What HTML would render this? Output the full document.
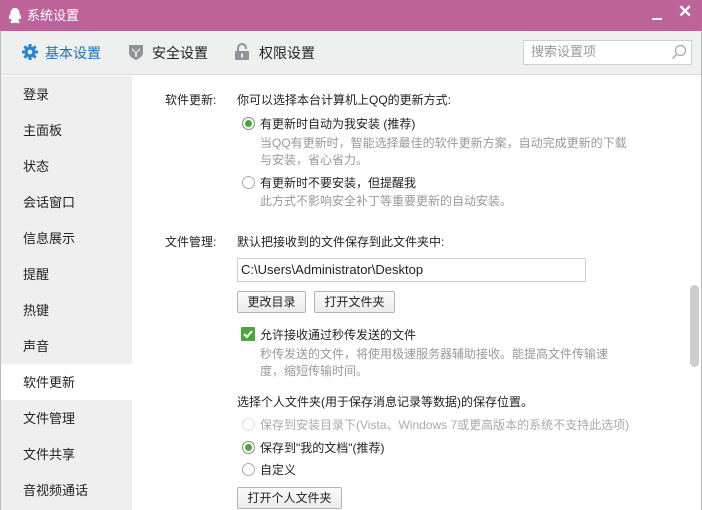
<!DOCTYPE html><html><head><meta charset="utf-8"><style>
*{margin:0;padding:0;box-sizing:border-box}
body{width:702px;height:510px;overflow:hidden;background:#fff;font:12px "Liberation Sans","Noto Sans CJK SC",sans-serif;color:#222;position:relative}
.a{position:absolute;white-space:nowrap;line-height:16px}
.g{color:#999}
.title{position:absolute;left:0;top:0;width:702px;height:31px;background:#bd6399}
.tb{position:absolute;left:0;top:31px;width:702px;height:44px;background:#eef0f0;border-bottom:1px solid #dcdcdc}
.side{position:absolute;left:0;top:76px;width:132px;height:434px;background:#efefef}
.si{position:absolute;left:23px;font-size:13px}
.sel{position:absolute;left:0;top:364px;width:132px;height:36px;background:#fff}
.rad{position:absolute;width:13px;height:13px;border:1px solid #aaa;border-radius:50%;background:#fff}
.rad.on{border-color:#888}
.rad.on::after{content:"";position:absolute;left:2px;top:2px;width:7px;height:7px;border-radius:50%;background:#4aa83a}
.btn{position:absolute;height:22px;border:1px solid #b5b5b5;border-radius:2px;background:linear-gradient(#fafafa,#ececec);text-align:center;line-height:20px;font-size:12px}
</style></head><body>
<div class="title"></div>
<svg class="a" style="left:7px;top:7px" width="16" height="18" viewBox="0 0 16 18"><path d="M8 1C4.5 1 3.5 4 3.5 6.5 2.5 8 1.5 10 2 12c.6.5 1.3-.6 1.5-1 .3 1.5 1 2.3 1.5 2.8-1 .4-2 1-1.5 2 1 .8 3 .3 4.5 0 1.5.3 3.5.8 4.5 0 .5-1-.5-1.6-1.5-2 .5-.5 1.2-1.3 1.5-2.8.2.4.9 1.5 1.5 1 .5-2-.5-4-1.5-5.5C12.5 4 11.5 1 8 1z" fill="#fff"/></svg>
<div class="a" style="left:27px;top:8px;color:#fff;font-size:13px">系统设置</div>
<div class="a" style="left:652px;top:18px;width:10px;height:2px;background:#fff"></div>
<div class="a" style="left:678px;top:4px;color:#fff;font-size:17px;font-weight:bold">✕</div>
<div class="tb"></div>
<svg class="a" style="left:22px;top:44px" width="16" height="16" viewBox="0 0 16 16"><g fill="#2a84d2"><circle cx="8" cy="8" r="5.5"/><rect x="6.5" y="0" width="3" height="16"/><rect x="0" y="6.5" width="16" height="3"/><rect x="6.5" y="0" width="3" height="16" transform="rotate(45 8 8)"/><rect x="6.5" y="0" width="3" height="16" transform="rotate(-45 8 8)"/></g><circle cx="8" cy="8" r="2.3" fill="#eef0f0"/></svg>
<div class="a" style="left:45px;top:45px;font-size:14px;color:#1e6fb8">基本设置</div>
<svg class="a" style="left:128px;top:44px" width="16" height="16" viewBox="0 0 16 16"><path d="M1 1h14v8c0 3-3 5-7 7-4-2-7-4-7-7z" fill="#8e9497"/><path d="M4 4l4 4 4-4v2l-3 3v4H7V9L4 6z" fill="#dfe2e3"/></svg>
<div class="a" style="left:152px;top:45px;font-size:14px">安全设置</div>
<svg class="a" style="left:235px;top:43px" width="14" height="17" viewBox="0 0 14 17"><path d="M3 8V5a4 4 0 0 1 8 0v1" stroke="#8e9497" stroke-width="2" fill="none"/><rect x="0" y="8" width="14" height="9" rx="1" fill="#8e9497"/><rect x="6" y="10.5" width="2" height="4" fill="#eef0f0"/></svg>
<div class="a" style="left:259px;top:45px;font-size:14px">权限设置</div>
<div class="a" style="left:523px;top:40px;width:169px;height:25px;border:1px solid #cfcfcf;background:#fff"></div>
<div class="a g" style="left:531px;top:44px;font-size:13px">搜索设置项</div>
<svg class="a" style="left:671px;top:44px" width="16" height="16" viewBox="0 0 16 16"><circle cx="9.5" cy="6.5" r="5" stroke="#aaa" stroke-width="1.3" fill="none"/><path d="M6 10l-4.5 4.5" stroke="#aaa" stroke-width="1.5"/></svg>
<div class="side"></div><div class="sel"></div>
<div class="si a" style="top:87px">登录</div>
<div class="si a" style="top:123px">主面板</div>
<div class="si a" style="top:159px">状态</div>
<div class="si a" style="top:195px">会话窗口</div>
<div class="si a" style="top:231px">信息展示</div>
<div class="si a" style="top:267px">提醒</div>
<div class="si a" style="top:303px">热键</div>
<div class="si a" style="top:339px">声音</div>
<div class="si a" style="top:375px">软件更新</div>
<div class="si a" style="top:411px">文件管理</div>
<div class="si a" style="top:447px">文件共享</div>
<div class="si a" style="top:483px">音视频通话</div>
<div class="a" style="left:165px;top:92px">软件更新:</div>
<div class="a" style="left:237px;top:92px">你可以选择本台计算机上QQ的更新方式:</div>
<div class="rad on" style="left:242px;top:117px"></div>
<div class="a" style="left:260px;top:116px">有更新时自动为我安装 (推荐)</div>
<div class="a g" style="left:260px;top:135px">当QQ有更新时，智能选择最佳的软件更新方案，自动完成更新的下载</div>
<div class="a g" style="left:260px;top:152px">与安装，省心省力。</div>
<div class="rad" style="left:242px;top:176px"></div>
<div class="a" style="left:260px;top:175px">有更新时不要安装，但提醒我</div>
<div class="a g" style="left:260px;top:193px">此方式不影响安全补丁等重要更新的自动安装。</div>
<div class="a" style="left:165px;top:234px">文件管理:</div>
<div class="a" style="left:237px;top:234px">默认把接收到的文件保存到此文件夹中:</div>
<div class="a" style="left:237px;top:258px;width:349px;height:24px;border:1px solid #cfcfcf"></div>
<div class="a" style="left:241px;top:262px;font-size:13px">C:\Users\Administrator\Desktop</div>
<div class="btn" style="left:237px;top:291px;width:69px">更改目录</div>
<div class="btn" style="left:314px;top:291px;width:81px">打开文件夹</div>
<div class="a" style="left:241px;top:327px;width:14px;height:14px;background:#4aa83a;border-radius:1px"></div>
<svg class="a" style="left:241px;top:327px" width="14" height="14"><path d="M3 7l3 3 5-6" stroke="#fff" stroke-width="2" fill="none"/></svg>
<div class="a" style="left:260px;top:327px">允许接收通过秒传发送的文件</div>
<div class="a g" style="left:260px;top:346px">秒传发送的文件，将使用极速服务器辅助接收。能提高文件传输速</div>
<div class="a g" style="left:260px;top:363px">度，缩短传输时间。</div>
<div class="a" style="left:237px;top:394px">选择个人文件夹(用于保存消息记录等数据)的保存位置。</div>
<div class="rad" style="left:242px;top:418px;border-color:#ddd"></div>
<div class="a g" style="left:260px;top:417px;color:#aaa">保存到安装目录下(Vista、Windows 7或更高版本的系统不支持此选项)</div>
<div class="rad on" style="left:242px;top:441px"></div>
<div class="a" style="left:260px;top:440px">保存到"我的文档"(推荐)</div>
<div class="rad" style="left:242px;top:463px"></div>
<div class="a" style="left:260px;top:462px">自定义</div>
<div class="btn" style="left:237px;top:487px;width:105px">打开个人文件夹</div>
<div class="a" style="left:690px;top:285px;width:9px;height:82px;background:#cdcdcd;border-radius:5px"></div>
<div class="a" style="left:701px;top:31px;width:1px;height:479px;background:#bbb"></div>
<div class="a" style="left:0;top:31px;width:1px;height:479px;background:#bbb"></div>
</body></html>
